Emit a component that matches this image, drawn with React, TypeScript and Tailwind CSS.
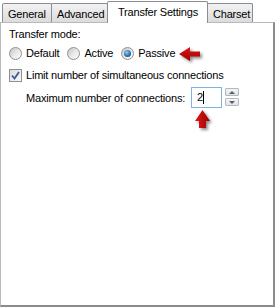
import React from "react";

const tabs = [
  { label: "General", w: "w-[50px]" },
  { label: "Advanced", w: "w-[57px]" },
  { label: "Transfer Settings", w: "w-[101px]", active: true },
  { label: "Charset", w: "w-[46px]" },
];

const Radio = ({ checked }: { checked?: boolean }) => (
  <span className="w-[13px] h-[13px] rounded-full border border-[#8e8f8f] bg-gradient-to-br from-[#c4c4c4] via-[#e8e8e8] to-[#fdfdfd] flex items-center justify-center shrink-0">
    {checked && (
      <span className="w-[7px] h-[7px] rounded-full bg-[radial-gradient(circle_at_40%_35%,#9cd0f5_0%,#2c6fb0_55%,#123f75_100%)]" />
    )}
  </span>
);

const Checkbox = () => (
  <span className="w-[13px] h-[13px] border border-[#8e8f8f] bg-gradient-to-br from-[#dcdcdc] to-[#fafafa] flex items-center justify-center shrink-0">
    <svg width="9" height="9" viewBox="0 0 9 9">
      <path d="M1 4.5 L3.5 7.5 L8 1" fill="none" stroke="#3b5a98" strokeWidth="1.8" />
    </svg>
  </span>
);

const LeftArrow = () => (
  <svg width="26" height="18" viewBox="0 0 26 18" className="drop-shadow-[2px_2px_1.5px_rgba(0,0,0,0.45)]">
    <defs>
      <linearGradient id="ra" x1="0" y1="0" x2="0" y2="1">
        <stop offset="0" stopColor="#e01818" />
        <stop offset="1" stopColor="#a00000" />
      </linearGradient>
    </defs>
    <path d="M1 8 L12 1 L12 5.5 L22 5.5 L22 10.5 L12 10.5 L12 15 Z" fill="url(#ra)" />
  </svg>
);

const UpArrow = () => (
  <svg width="20" height="24" viewBox="0 0 20 24" className="drop-shadow-[2px_2px_1.5px_rgba(0,0,0,0.45)]">
    <defs>
      <linearGradient id="rb" x1="0" y1="0" x2="1" y2="0">
        <stop offset="0" stopColor="#e01818" />
        <stop offset="1" stopColor="#a00000" />
      </linearGradient>
    </defs>
    <path d="M8.5 1 L16 12 L12 12 L12 19 L5 19 L5 12 L1 12 Z" fill="url(#rb)" />
  </svg>
);

export default function App() {
  return (
    <div className="w-[277px] h-[307px] bg-white overflow-hidden font-['Liberation_Sans',Arial,sans-serif] text-[11px] tracking-[-0.2px] text-black leading-[13px]">
      {/* Tabs */}
      <div className="flex items-end h-[22px] pl-[2px]">
        {tabs.map((t, i) => (
          <div
            key={t.label}
            className={
              t.active
                ? `${t.w} -ml-px h-[22px] relative z-10 -mb-px bg-white border border-b-0 border-[#898c95] rounded-t-[2px] pl-[10px] pt-[4px]`
                : `${t.w} ${i > 0 ? "-ml-px" : ""} h-[19px] bg-gradient-to-b from-[#f2f2f2] to-[#dcdcdc] border border-b-0 border-[#898c95] rounded-t-[2px] pl-[5px] pt-[4px]`
            }
          >
            {t.label}
          </div>
        ))}
      </div>

      {/* Panel */}
      <div className="w-[275px] h-[285px] border border-[#b8bac0] border-r-2 border-b-2 border-r-[#8c8c8c] border-b-[#8c8c8c] pl-[8px] pt-[5px]">
        <div>Transfer mode:</div>

        <div className="flex items-center mt-[6px] h-[13px]">
          <Radio />
          <span className="ml-[4px]">Default</span>
          <span className="ml-[8px]"><Radio /></span>
          <span className="ml-[4px]">Active</span>
          <span className="ml-[8px]"><Radio checked /></span>
          <span className="ml-[4px]">Passive</span>
          <span className="ml-[3px] mt-[2px]"><LeftArrow /></span>
        </div>

        <div className="flex items-center mt-[9px] h-[13px]">
          <Checkbox />
          <span className="ml-[4px]">Limit number of simultaneous connections</span>
        </div>

        <div className="flex items-start mt-[5px] pl-[17px]">
          <span className="mt-[5px] w-[165px]">Maximum number of connections:</span>
          <div className="flex flex-col items-center">
            <div className="w-[31px] h-[21px] border border-[#7eb4ea] flex items-center pl-[5px]">
              <span>2</span>
              <span className="w-px h-[13px] bg-black" />
            </div>
            <div className="mt-[1px] pr-[5px]">
              <UpArrow />
            </div>
          </div>
          <div className="ml-[3px] mt-px flex flex-col gap-[2px]">
            <div className="w-[14px] h-[8px] border border-[#b5b8bd] rounded-[1px] bg-gradient-to-b from-[#f6f6f6] to-[#e2e2e2] flex items-center justify-center">
              <span className="w-0 h-0 border-x-[3px] border-x-transparent border-b-[3px] border-b-[#4c607a]" />
            </div>
            <div className="w-[14px] h-[8px] border border-[#b5b8bd] rounded-[1px] bg-gradient-to-b from-[#f6f6f6] to-[#e2e2e2] flex items-center justify-center">
              <span className="w-0 h-0 border-x-[3px] border-x-transparent border-t-[3px] border-t-[#4c607a]" />
            </div>
          </div>
        </div>
      </div>
    </div>
  );
}
